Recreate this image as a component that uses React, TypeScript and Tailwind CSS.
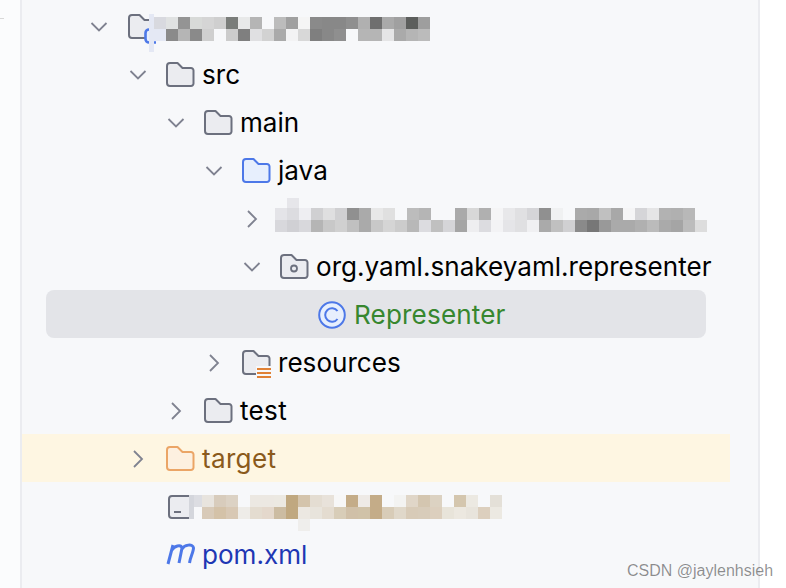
import type { ReactNode } from "react";

const Chevron = ({ open }: { open: boolean }) => (
  <svg width="20" height="20" viewBox="0 0 20 20" fill="none" stroke="#7f8290" strokeWidth="1.8" className="shrink-0">
    {open ? <path d="M2.5 6 L10 13.5 L17.5 6" /> : <path d="M6 2 L14 10 L6 18" />}
  </svg>
);

const Folder = ({ stroke = "#6c707e", fill = "#ebecf0", children }: { stroke?: string; fill?: string; children?: ReactNode }) => (
  <svg width="30" height="28" viewBox="0 0 30 28" className="shrink-0">
    <path
      d="M2 5 a3 3 0 0 1 3-3 h7.5 l5 5 h8.5 a2.5 2.5 0 0 1 2.5 2.5 v13 a2.5 2.5 0 0 1-2.5 2.5 h-21 a3 3 0 0 1-3-3 z"
      fill={fill}
      stroke={stroke}
      strokeWidth="2"
      strokeLinejoin="round"
    />
    {children}
  </svg>
);

const ClassIcon = () => (
  <svg width="28" height="28" viewBox="0 0 28 28" fill="none" className="shrink-0">
    <circle cx="14" cy="14" r="12.8" fill="#e7effd" stroke="#4d78e8" strokeWidth="2" />
    <path d="M19.5 10 a6.8 6.8 0 1 0 0 8" stroke="#4d78e8" strokeWidth="2" />
  </svg>
);

const MavenIcon = () => (
  <svg width="32" height="26" viewBox="0 0 32 26" fill="none" stroke="#4d78e8" strokeWidth="3" className="shrink-0">
    <path d="M4 22 L9 3 M8 8 C10 4 17 2 18 6 L15 21 M18 7 C20 3 29 1 29.5 6 C29.5 10 26 16 25.5 21" />
  </svg>
);

const Label = ({ children, className = "" }: { children: ReactNode; className?: string }) => (
  <span className={`ml-[7px] mb-px ${className}`}>{children}</span>
);

const Mosaic = ({ rows }: { rows: string[][] }) => (
  <div className="flex flex-col shrink-0">
    {rows.map((cells, r) => (
      <div key={r} className="flex h-3">
        {cells.map((c, i) => (
          <div key={i} className="w-3 h-3" style={{ backgroundColor: c }} />
        ))}
      </div>
    ))}
  </div>
);

const BG = "#f7f8fa";

const moduleName = [
  ["#d8d9df", "#e0e2e2", "#949494", "#d8dad8", "#d5d5d5", "#cfcfcf", "#7a7d7a", "#e8e9e9", "#b5b5b5", BG, "#bcbcbc", "#a0a0a0", "#f5f5f5", "#8a8a8a", "#888888", "#888888", "#8f8f8f", "#b0b0b0", "#6f6f6f", "#aaaaaa", "#a0a0a0", "#5c5e5c", "#9e9e9e"],
  ["#e4e8f4", "#8a8a8a", "#b5b5b5", "#8a8a8a", "#cfcfcf", BG, "#cccccc", "#7f7f7f", "#e0e0e2", "#d2d2d2", "#aaaaaa", "#f3f3f4", "#d8d8d8", "#7f7f7f", "#888888", "#8f8f8f", BG, "#b5b5b5", "#b5b5b5", "#e5e5e6", "#aaaaaa", "#b5b5b5", "#bbbbbb"],
];

const hiddenPackage = [
  ["#e4e4e8", "#dcdce0", "#eeeef2", "#d0d0d2", "#dfdfe0", "#d0d0d2", "#909090", "#aaaaaa", "#e8e8e8", "#e0e0e0", BG, "#bcbcbc", "#b5b5b5", BG, BG, "#aaaaaa", "#d8d8d8", "#b0b0b0", "#f5f5f6", "#e8e8ea", "#e0e0e2", "#d5d5d8", "#909090", "#f0f1f2", BG, "#aaaaaa", "#a8a8a8", "#c0c0c0", "#a8a8a8", "#f5f5f6", "#d5d5d8", "#e5e5e6", "#b2b2b2", "#b0b0b0", "#b8b8b8", BG],
  ["#d8d8dc", "#d0d0d4", "#d8d8dc", "#b5b5b5", "#c8c8c8", "#d0d0d0", "#c0c0c0", "#aaaaaa", "#c8c8c8", "#d5d5d5", "#cccccc", "#b8b8b8", "#dcdce0", "#c0c0c0", "#d5d5d8", "#a5a5a5", "#eeeef0", "#dcdce0", "#f3f3f5", "#e5e5e8", "#e0e0e2", "#f0f0f2", "#aaaaaa", "#c0c0c0", "#d0d0d2", "#8a8a8a", "#777777", "#999999", "#aaaaaa", "#aaaaaa", "#b0b0b0", "#bbbbbb", "#aaaaaa", "#a5a5a5", "#bcbcbc", "#dddddd"],
];

const hiddenFile = [
  ["#dcdde2", "#e8e4de", "#d8ccbc", "#dcd2c4", BG, "#ece8e2", "#ece8e2", "#ece9e2", "#c0a880", "#d4c4ac", "#e4ddd2", "#e8e2da", "#f7f7f7", "#c4ac88", "#eeeae6", "#c4ac88", BG, "#f3f3f2", "#e0d6c8", "#d4c6b0", "#dcd2c2", BG, "#d4c6ae", "#ece9e2", BG, "#e4e0d8"],
  [BG, "#d8cab8", "#d4c2a8", "#d8c8b4", "#eeece8", "#e4dcd0", "#e4d8cc", "#ccbca2", "#c0a880", "#ece8e2", "#e8e4dc", "#e4dcd0", "#d8cdb8", "#d0c0a8", "#d0c2a8", "#c4ac88", "#d8ccb8", "#e0d8ca", "#d8cbb8", "#d8ccba", "#dccfbe", "#e8e4da", "#ece8e0", "#e8e4dc", "#dccfbe", "#ece9e2"],
];

const Row = ({ pad, open, children, className = "" }: { pad: string; open?: boolean; children: ReactNode; className?: string }) => (
  <div className={`flex items-center h-12 ${pad} ${className}`}>
    <Chevron open={!!open} />
    {children}
  </div>
);

export default function App() {
  return (
    <div className="relative flex w-[786px] h-[588px] overflow-hidden bg-white text-[26.1px] text-black font-['Inter',sans-serif]">
      <div className="relative w-5 bg-[#fbfcfd]">
        <div className="absolute left-0 top-[18px] w-1 h-px bg-[#d8d8d8]" />
      </div>
      <div className="relative w-[740px] pt-[3px] pr-7 bg-[#f7f8fa] border-x-2 border-[#ebecf0]">
        <Row pad="pl-[67px]" open>
          <div className="relative ml-[18px]">
            <Folder />
            <svg width="12" height="16" viewBox="0 0 12 16" className="absolute left-[17px] top-[15px]">
              <rect x="1.5" y="1.5" width="14" height="13" rx="3.5" fill="#e7effd" stroke="#4d78e8" strokeWidth="2.6" />
            </svg>
          </div>
          <div className="relative ml-[-8px] mt-1">
            <div className="absolute left-0 top-[-3px] w-[5px] h-[38px] bg-[#e4e8f4]" />
            <div className="ml-[5px]">
              <Mosaic rows={moduleName} />
            </div>
          </div>
        </Row>
        <Row pad="pl-[106px]" open>
          <div className="ml-[17px]"><Folder /></div>
          <Label>src</Label>
        </Row>
        <Row pad="pl-[144px]" open>
          <div className="ml-[17px]"><Folder /></div>
          <Label>main</Label>
        </Row>
        <Row pad="pl-[182px]" open>
          <div className="ml-[17px]"><Folder stroke="#4d78e8" fill="#e7effd" /></div>
          <Label>java</Label>
        </Row>
        <Row pad="pl-[220px]">
          <div className="ml-[13px] mt-[2px] relative">
            <div className="absolute left-3 top-[-10px] w-3 h-[10px] bg-[#e6e6ea]" />
            <Mosaic rows={hiddenPackage} />
          </div>
        </Row>
        <Row pad="pl-[220px]" open>
          <div className="ml-[17px]">
            <Folder>
              <circle cx="15" cy="15.5" r="3" fill="none" stroke="#6c707e" strokeWidth="1.8" />
            </Folder>
          </div>
          <Label>org.yaml.snakeyaml.representer</Label>
        </Row>
        <div className="flex items-center h-12 -mt-px mb-px pt-[2px] mx-6 pl-[272px] rounded-lg bg-[#e3e4e8] text-[#37872f]">
          <ClassIcon />
          <span className="ml-2 mb-px tracking-[0.15px]">Representer</span>
        </div>
        <Row pad="pl-[182px]">
          <div className="relative ml-[17px]">
            <Folder />
            <svg width="16" height="13" viewBox="0 0 16 13" className="absolute left-[15px] top-[17px]">
              <rect width="16" height="13" fill="#f7f8fa" />
              <path d="M1 3 H15 M1 7 H15 M1 11 H15" stroke="#e08135" strokeWidth="2" />
            </svg>
          </div>
          <Label>resources</Label>
        </Row>
        <Row pad="pl-[144px]">
          <div className="ml-[17px]"><Folder /></div>
          <Label className="tracking-[0.3px]">test</Label>
        </Row>
        <Row pad="pl-[106px]" className="-mt-px mb-px pt-[2px] bg-[#fef6e2] text-[#8a5a1c]">
          <div className="ml-[17px]"><Folder stroke="#eba566" fill="#fdf0e0" /></div>
          <Label className="tracking-[0.3px]">target</Label>
        </Row>
        <div className="flex items-center h-12 pl-[146px]">
          <div className="relative">
            <svg width="22" height="24" viewBox="0 0 22 24" className="shrink-0">
              <rect x="1" y="1" width="24" height="22" rx="3" fill="#ebecf0" stroke="#6c707e" strokeWidth="2" />
              <path d="M6 17 H13" stroke="#6c707e" strokeWidth="2" />
            </svg>
          </div>
          <div className="relative">
            <div className="absolute left-[-1px] top-0 w-[5px] h-6 bg-[#d4d6dc]" />
            <Mosaic rows={hiddenFile} />
            <div className="absolute left-[108px] top-6 w-3 h-3 bg-[#efeeec]" />
          </div>
        </div>
        <div className="flex items-center h-12 pl-[142px] text-[#1e37b4]">
          <MavenIcon />
          <span className="ml-[6px] mb-px">pom.xml</span>
        </div>
      </div>
      <div className="flex-1 bg-white" />
      <span className="absolute left-[627px] top-[559px] text-[16px] text-[#00000070] font-['Liberation_Sans',sans-serif]">
        CSDN @jaylenhsieh
      </span>
    </div>
  );
}
